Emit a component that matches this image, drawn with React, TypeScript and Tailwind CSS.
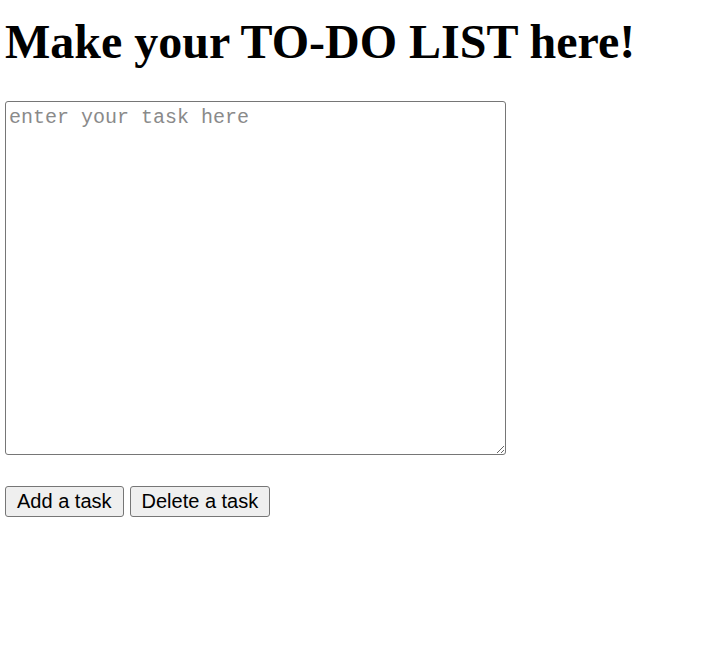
import { useState } from "react";

function App() {
  const [task, setTask] = useState<string>("");

  return (
    <div className="min-h-screen bg-white px-[5px] pt-[14px] text-black">
      <h1 className="font-['Liberation_Serif',serif] text-[48px] font-bold leading-[55px]">
        Make your TO-DO LIST here!
      </h1>
      <textarea
        className="mt-[32px] block h-[354px] w-[501px] resize rounded-[3px] border border-[#767676] px-[3px] pt-[4px] pb-[3px] font-['Liberation_Mono',monospace] text-[20px] leading-[23px] outline-none placeholder:text-[#8a8a8a]"
        placeholder="enter your task here"
        value={task}
        onChange={(e) => setTask(e.target.value)}
      />
      <div className="mt-[31px] flex gap-[6px]">
        <button className="h-[31px] rounded-[3px] border border-[#767676] bg-[#efefef] px-[11px] font-['Liberation_Sans',Arial,sans-serif] text-[20px] leading-[23px] text-black">
          Add a task
        </button>
        <button className="h-[31px] rounded-[3px] border border-[#767676] bg-[#efefef] px-[11px] font-['Liberation_Sans',Arial,sans-serif] text-[20px] leading-[23px] text-black">
          Delete a task
        </button>
      </div>
    </div>
  );
}

export default App;
